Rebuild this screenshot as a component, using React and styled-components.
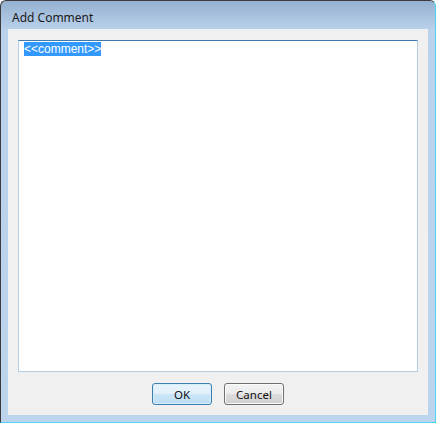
import React from 'react';
import styled, { createGlobalStyle } from 'styled-components';

const GlobalStyle = createGlobalStyle`
  html, body {
    margin: 0;
    padding: 0;
    background: #ffffff;
  }
`;

const App = () => {
  return (
    <>
      <GlobalStyle />
      <Window>
        <TitleBar>Add Comment</TitleBar>
        <Body>
          <CommentBox>
            <Selected>&lt;&lt;comment&gt;&gt;</Selected>
          </CommentBox>
          <ButtonRow>
            <Button $primary>OK</Button>
            <Button>Cancel</Button>
          </ButtonRow>
        </Body>
      </Window>
    </>
  );
};

const Window = styled.div`
  box-sizing: border-box;
  width: 436px;
  height: 423px;
  display: flex;
  flex-direction: column;
  border-top: 1px solid #3b3b3b;
  border-left: 1px solid #3b3b3b;
  border-right: 1px solid #4fd4f2;
  border-bottom: 1px solid #4fd4f2;
  border-radius: 6px 6px 0 0;
  background: linear-gradient(to bottom, #95b1d1 0px, #b8d0ea 28px, #bad2ec 29px, #bcd4ec 100%);
  overflow: hidden;
`;

const TitleBar = styled.div`
  height: 28px;
  flex: none;
  display: flex;
  align-items: center;
  padding-left: 11px;
  padding-top: 4px;
  box-sizing: border-box;
  font-family: "Noto Sans", "Open Sans", sans-serif;
  font-size: 12px;
  color: #1b1b1b;
`;

const Body = styled.div`
  flex: 1;
  margin: 0 7px 7px 7px;
  background: #f0f0f0;
  display: flex;
  flex-direction: column;
  padding: 11px 10px 10px 10px;
  gap: 11px;
`;

const CommentBox = styled.div`
  box-sizing: border-box;
  height: 332px;
  background: #ffffff;
  border: 1px solid #b5cfe7;
  border-top-color: #3d7bb0;
  padding: 2px 5px;
  font-family: "Liberation Sans", Arial, sans-serif;
  font-size: 12px;
  line-height: 13px;
`;

const Selected = styled.span`
  background: #3399ff;
  color: #ffffff;
`;

const ButtonRow = styled.div`
  display: flex;
  justify-content: center;
  gap: 12px;
`;

const Button = styled.button`
  box-sizing: border-box;
  width: 60px;
  height: 22px;
  padding: 0;
  border-radius: 3px;
  border: 1px solid ${(p) => (p.$primary ? '#3c7fb1' : '#707070')};
  box-shadow: inset 0 0 0 1px ${(p) => (p.$primary ? '#d6eefb' : '#fbfbfb')};
  background: ${(p) =>
    p.$primary
      ? 'linear-gradient(to bottom, #e7f3fb 0%, #e1f0fb 50%, #cce6f8 51%, #bcdcf4 100%)'
      : 'linear-gradient(to bottom, #f2f2f2 0%, #ebebeb 50%, #dddddd 51%, #cfcfcf 100%)'};
  font-family: "Noto Sans", "Open Sans", sans-serif;
  font-size: 11.5px;
  color: #111111;
  cursor: default;
`;

export default App;
